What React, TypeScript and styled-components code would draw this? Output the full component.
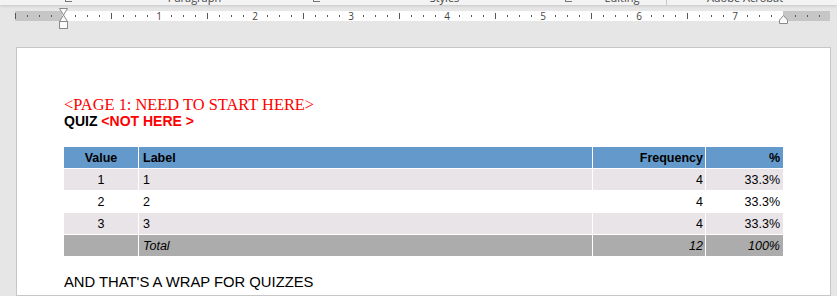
import React from "react";
import styled, { createGlobalStyle } from "styled-components";

const Global = createGlobalStyle`
  html, body { margin: 0; padding: 0; background: #e6e6e6; overflow: hidden; }
  *, *::before, *::after { box-sizing: border-box; }
`;

const Screen = styled.div`
  width: 837px;
  height: 296px;
  overflow: hidden;
  background: #e6e6e6;
  display: flex;
  flex-direction: column;
`;

const Ribbon = styled.div`
  height: 5px;
  flex-shrink: 0;
  background: #f3f3f3;
  display: flex;
  align-items: flex-end;
  overflow: hidden;
  box-shadow: 0 1px 3px rgba(0, 0, 0, 0.14);
  position: relative;
  z-index: 1;
`;

const Group = styled.div<{ $w: number; $pr?: number; $sep?: boolean }>`
  width: ${(p) => p.$w}px;
  flex-shrink: 0;
  height: 100%;
  display: flex;
  align-items: flex-end;
  padding-right: ${(p) => p.$pr ?? 4}px;
  border-right: ${(p) => (p.$sep ? "1px solid #c8c8c8" : "none")};
`;

const GroupLabel = styled.span`
  flex: 1;
  text-align: center;
  font: 11px/13px "Open Sans", sans-serif;
  color: #444;
  white-space: nowrap;
  margin-bottom: 1px;
`;

const Launcher = styled.span`
  width: 7px;
  height: 7px;
  flex-shrink: 0;
  margin-bottom: 3px;
  border-left: 1px solid #777;
  border-bottom: 1px solid #777;
`;

const Ruler = styled.div`
  margin: 6px 0 0 15px;
  width: 815px;
  height: 10px;
  flex-shrink: 0;
  position: relative;
  display: flex;
  background: linear-gradient(
    to right,
    #c6c6c6 0 47px,
    #ffffff 47px 768px,
    #c6c6c6 768px 815px
  );
`;

const Ticks = styled.div`
  display: flex;
  margin-left: -6px;
  height: 100%;
`;

const TickCell = styled.div`
  width: 12px;
  height: 100%;
  flex-shrink: 0;
  display: flex;
  align-items: center;
  justify-content: center;
`;

const Dot = styled.span`
  width: 1px;
  height: 2px;
  background: #555;
`;

const HalfMark = styled.span`
  width: 1px;
  height: 6px;
  background: #555;
`;

const InchNum = styled.span`
  font: 10px/10px "Open Sans", sans-serif;
  color: #444;
`;

const LeftIndent = styled.svg`
  position: absolute;
  left: 43px;
  top: -3px;
`;

const RightIndent = styled.svg`
  position: absolute;
  left: 763px;
  top: 4px;
`;

const Page = styled.div`
  margin: 26px 0 0 16px;
  width: 815px;
  flex: 1 0 auto;
  background: #fff;
  border: 1px solid #c6c6c6;
  padding: 48px 47px 0;
`;

const Title = styled.div`
  font: 16.4px/17px "Liberation Serif", "Times New Roman", serif;
  color: #ff0000;
`;

const Heading = styled.div`
  font: bold 14px/16px "Liberation Sans", Arial, sans-serif;
  color: #000;
`;

const Red = styled.span`
  color: #ff0000;
`;

const Table = styled.table`
  margin-top: 18px;
  width: 719px;
  table-layout: fixed;
  border-collapse: separate;
  border-spacing: 0;
  font: 12.5px "Liberation Sans", Arial, sans-serif;
  color: #000;
`;

type Kind = "head" | "shade" | "plain" | "total";

const bg: Record<Kind, string> = {
  head: "#6399cb",
  shade: "#e8e4e8",
  plain: "#ffffff",
  total: "#acacac",
};

const Row = styled.tr<{ $kind: Kind; $first?: boolean }>`
  height: ${(p) => (p.$first ? 21 : 22)}px;
  background: ${(p) => bg[p.$kind]};
  font-weight: ${(p) => (p.$kind === "head" ? "bold" : "normal")};
  font-style: ${(p) => (p.$kind === "total" ? "italic" : "normal")};
`;

const Cell = styled.td<{ $align: "left" | "center" | "right"; $pad: number; $first?: boolean; $top?: boolean }>`
  text-align: ${(p) => p.$align};
  padding: 0 ${(p) => (p.$align === "right" ? p.$pad : 0)}px 0
    ${(p) => (p.$align === "left" ? p.$pad : 0)}px;
  border-left: ${(p) => (p.$first ? "none" : "1px solid #fff")};
  border-top: ${(p) => (p.$top ? "1px solid #fff" : "none")};
  vertical-align: middle;
  white-space: nowrap;
`;

const Closing = styled.div`
  margin-top: 18px;
  font: 14.8px/17px "Liberation Sans", Arial, sans-serif;
  color: #000;
`;

const rows: { kind: Kind; cells: string[] }[] = [
  { kind: "head", cells: ["Value", "Label", "Frequency", "%"] },
  { kind: "shade", cells: ["1", "1", "4", "33.3%"] },
  { kind: "plain", cells: ["2", "2", "4", "33.3%"] },
  { kind: "shade", cells: ["3", "3", "4", "33.3%"] },
  { kind: "total", cells: ["", "Total", "12", "100%"] },
];

const colDefs: { align: "left" | "center" | "right"; pad: number; w: number }[] = [
  { align: "center", pad: 0, w: 74 },
  { align: "left", pad: 4, w: 454 },
  { align: "right", pad: 2, w: 113 },
  { align: "right", pad: 3, w: 78 },
];

function tick(k: number) {
  if (k === 4 || k === 64) return null;
  const rel = k - 4;
  const m = ((rel % 8) + 8) % 8;
  if (m === 0) return <InchNum>{rel / 8}</InchNum>;
  if (m === 4) return <HalfMark />;
  return <Dot />;
}

export default function App() {
  return (
    <Screen>
      <Global />
      <Ribbon>
        <Group $w={76}>
          <GroupLabel />
          <Launcher />
        </Group>
        <Group $w={248}>
          <GroupLabel>Paragraph</GroupLabel>
          <Launcher />
        </Group>
        <Group $w={254} $pr={6}>
          <GroupLabel>Styles</GroupLabel>
          <Launcher />
        </Group>
        <Group $w={89} $pr={0} $sep>
          <GroupLabel>Editing</GroupLabel>
        </Group>
        <Group $w={170} $pr={14}>
          <GroupLabel>Adobe Acrobat</GroupLabel>
        </Group>
      </Ribbon>

      <Ruler>
        <Ticks>
          {Array.from({ length: 68 }, (_, k) => (
            <TickCell key={k}>{tick(k)}</TickCell>
          ))}
        </Ticks>
        <LeftIndent width="11" height="22" viewBox="0 0 11 22">
          <polygon points="1.5,0.5 9.5,0.5 5.5,7" fill="#fafafa" stroke="#8a8a8a" />
          <polygon points="5.5,7 1.5,13.5 9.5,13.5" fill="#fafafa" stroke="#8a8a8a" />
          <rect x="1.5" y="13.5" width="8" height="7" fill="#fafafa" stroke="#8a8a8a" />
        </LeftIndent>
        <RightIndent width="11" height="10" viewBox="0 0 11 10">
          <polygon points="5.5,0.5 1.5,5 1.5,8.5 9.5,8.5 9.5,5" fill="#fafafa" stroke="#8a8a8a" />
        </RightIndent>
      </Ruler>

      <Page>
        <Title>&lt;PAGE 1: NEED TO START HERE&gt;</Title>
        <Heading>
          QUIZ <Red>&lt;NOT HERE &gt;</Red>
        </Heading>
        <Table>
          <colgroup>
            {colDefs.map((c, i) => (
              <col key={i} style={{ width: c.w }} />
            ))}
          </colgroup>
          <tbody>
            {rows.map((r, ri) => (
              <Row key={ri} $kind={r.kind} $first={ri === 0}>
                {r.cells.map((text, ci) => (
                  <Cell
                    key={ci}
                    $align={colDefs[ci].align}
                    $pad={colDefs[ci].pad}
                    $first={ci === 0}
                    $top={ri > 0}
                  >
                    {text}
                  </Cell>
                ))}
              </Row>
            ))}
          </tbody>
        </Table>
        <Closing>AND THAT'S A WRAP FOR QUIZZES</Closing>
      </Page>
    </Screen>
  );
}
